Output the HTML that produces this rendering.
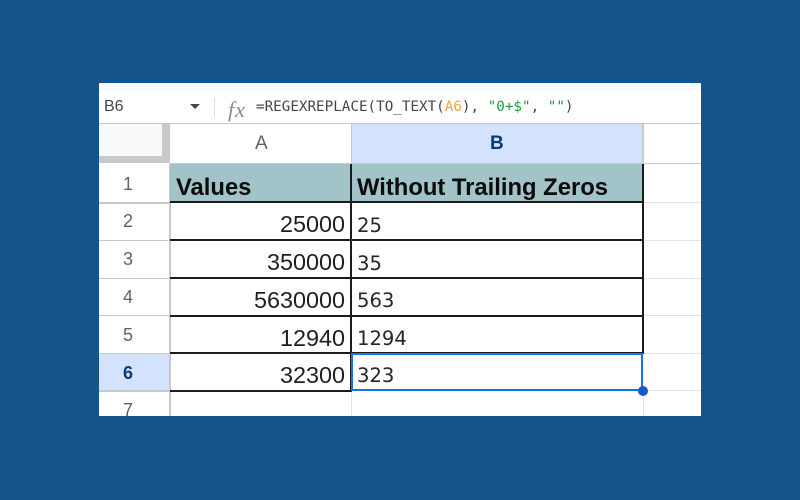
<!DOCTYPE html>
<html>
<head>
<meta charset="utf-8">
<style>
html,body{margin:0;padding:0;width:800px;height:500px;overflow:hidden;background:#14548a;}
#s{position:absolute;left:99px;top:83px;width:602px;height:333px;background:#fff;overflow:hidden;filter:blur(.3px);}
#s div{position:absolute;}
.t{white-space:nowrap;line-height:1;}
.lg{background:#e2e3e3;}
.hg{background:#c8c9c9;}
.k{background:#1c1c1c;}
.rn{left:-1px;width:60px;text-align:center;font:18px "Liberation Sans",sans-serif;color:#5f6368;}
.a{right:356px;font:23.4px "Liberation Sans",sans-serif;color:#1f1f1f;}
.b{left:258px;font:19.6px "DejaVu Sans",sans-serif;color:#262626;}
.h{font:bold 23.8px "Liberation Sans",sans-serif;color:#0b0b0b;}
.f{top:16px;font:14.25px "DejaVu Sans Mono",monospace;color:#444746;left:157px;}
</style>
</head>
<body>
<div id="s">
  <div style="left:0;top:0;width:602px;height:7px;background:#f8fafd"></div>

  <div class="t" style="left:5px;top:15px;font:16px 'Liberation Sans',sans-serif;color:#444746">B6</div>
  <div style="left:91px;top:21px;width:0;height:0;border-left:5px solid transparent;border-right:5px solid transparent;border-top:5px solid #444746"></div>
  <div style="left:115px;top:15px;width:1px;height:19px;background:#dadce0"></div>
  <div class="t" style="left:129px;top:14px;font:italic 22px 'Liberation Serif',serif;letter-spacing:1px;color:#8a8c8e">fx</div>
  <div class="t f">=REGEXREPLACE(TO_TEXT(<span style="color:#f7a13c">A6</span>), <span style="color:#1f9d3a">"0+$"</span>, <span style="color:#1f9d3a">""</span>)</div>

  <div class="hg" style="left:0;top:40px;width:602px;height:1px"></div>
  <div style="left:252px;top:41px;width:292px;height:39px;background:#d3e3fd"></div>
  <div style="left:0;top:41px;width:63px;height:32px;background:#f8f9fa"></div>
  <div class="hg" style="left:63px;top:41px;width:8px;height:39px"></div>
  <div class="hg" style="left:0;top:73px;width:71px;height:7px"></div>
  <div class="hg" style="left:252px;top:41px;width:1px;height:39px"></div>
  <div class="hg" style="left:543px;top:41px;width:2px;height:39px"></div>
  <div class="hg" style="left:71px;top:80px;width:531px;height:1px"></div>

  <div class="t" style="left:156px;top:50px;font:19px 'Liberation Sans',sans-serif;color:#5f6368">A</div>
  <div class="t" style="left:391px;top:50px;font:bold 19px 'Liberation Sans',sans-serif;color:#0b3a77">B</div>

  <div style="left:0;top:270px;width:70px;height:37px;background:#d3e3fd"></div>
  <div class="hg" style="left:0;top:119px;width:71px;height:2px"></div>
  <div class="hg" style="left:0;top:157px;width:71px;height:1px"></div>
  <div class="hg" style="left:0;top:195px;width:71px;height:1px"></div>
  <div class="hg" style="left:0;top:232px;width:71px;height:1px"></div>
  <div class="hg" style="left:0;top:270px;width:71px;height:1px"></div>
  <div class="hg" style="left:0;top:307px;width:71px;height:2px"></div>
  <div class="hg" style="left:70px;top:81px;width:2px;height:252px"></div>

  <div class="t rn" style="top:91px">1</div>
  <div class="t rn" style="top:128px">2</div>
  <div class="t rn" style="top:166px">3</div>
  <div class="t rn" style="top:204px">4</div>
  <div class="t rn" style="top:242px">5</div>
  <div class="t rn" style="top:280px;font-weight:bold;color:#0b3a77">6</div>
  <div class="t rn" style="top:317px">7</div>

  <div class="lg" style="left:544px;top:119px;width:58px;height:1px"></div>
  <div class="lg" style="left:544px;top:157px;width:58px;height:1px"></div>
  <div class="lg" style="left:544px;top:195px;width:58px;height:1px"></div>
  <div class="lg" style="left:544px;top:232px;width:58px;height:1px"></div>
  <div class="lg" style="left:544px;top:270px;width:58px;height:1px"></div>
  <div class="lg" style="left:544px;top:307px;width:58px;height:1px"></div>
  <div class="lg" style="left:252px;top:309px;width:1px;height:24px"></div>
  <div class="lg" style="left:544px;top:309px;width:1px;height:24px"></div>

  <div style="left:71px;top:81px;width:473px;height:38px;background:#a2c4c9"></div>

  <div class="k" style="left:71px;top:118px;width:473px;height:2px"></div>
  <div class="k" style="left:71px;top:156px;width:473px;height:2px"></div>
  <div class="k" style="left:71px;top:194px;width:473px;height:2px"></div>
  <div class="k" style="left:71px;top:232px;width:473px;height:2px"></div>
  <div class="k" style="left:71px;top:269px;width:473px;height:2px"></div>
  <div class="k" style="left:71px;top:307px;width:181px;height:2px"></div>
  <div class="k" style="left:251px;top:81px;width:2px;height:228px"></div>
  <div class="k" style="left:543px;top:81px;width:2px;height:190px"></div>

  <div class="t h" style="left:77px;top:91px">Values</div>
  <div class="t h" style="left:258px;top:91px">Without Trailing Zeros</div>

  <div class="t a" style="top:128px">25000</div>
  <div class="t a" style="top:166px">350000</div>
  <div class="t a" style="top:204px">5630000</div>
  <div class="t a" style="top:242px">12940</div>
  <div class="t a" style="top:279px">32300</div>

  <div class="t b" style="top:131px">25</div>
  <div class="t b" style="top:169px">35</div>
  <div class="t b" style="top:206px">563</div>
  <div class="t b" style="top:244px">1294</div>
  <div class="t b" style="top:281px">323</div>

  <div style="left:252px;top:270px;width:288px;height:34px;border:2px solid #1a73e8"></div>
  <div style="left:539px;top:303px;width:10px;height:10px;border-radius:50%;background:#1558d0"></div>
</div>
</body>
</html>
